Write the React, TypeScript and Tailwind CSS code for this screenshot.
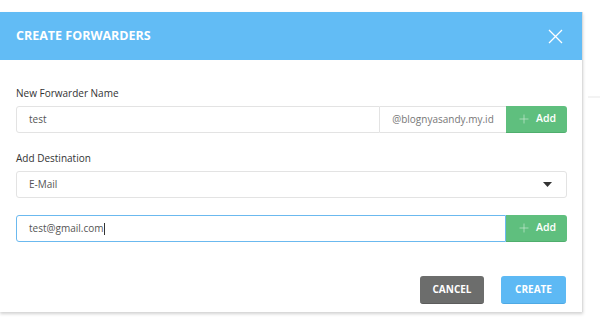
import { Plus } from 'lucide-react'

function AddButton(): JSX.Element {
  return (
    <button className="flex h-full w-[61px] shrink-0 items-center justify-center gap-[5px] rounded-r-[3px] border-b border-[#4fae6d] bg-[#5fbf7e] text-[10.5px] font-semibold text-white">
      <Plus className="h-[14px] w-[14px] opacity-70" strokeWidth={1.1} />
      Add
    </button>
  )
}

export default function App(): JSX.Element {
  return (
    <div
      className="relative h-[322px] w-[600px] overflow-hidden bg-white pt-[12px]"
      style={{ fontFamily: '"Open Sans", "Liberation Sans", sans-serif' }}
    >
      <div className="absolute right-[0px] top-[96px] h-[2px] w-[12px] bg-[#f3f3f3]" />
      <div className="w-[583px] border-r border-[#dcdcdc] bg-white pb-[8px] shadow-[0_2px_3px_rgba(0,0,0,0.18)]">
        <div className="flex h-[48px] items-center justify-between bg-[#62bcf5] pl-[16px] pr-[19px]">
          <h1 className="text-[12.5px] font-bold text-white">CREATE FORWARDERS</h1>
          <svg width="15" height="15" viewBox="0 0 15 15" className="text-white">
            <path d="M1 1 L14 14 M14 1 L1 14" stroke="currentColor" strokeWidth="1.3" fill="none" />
          </svg>
        </div>

        <div className="px-[16px]">
          <label className="mt-[26px] block text-[10px] leading-[14px] text-[#333]">New Forwarder Name</label>
          <div className="mt-[6px] flex h-[27px] w-[551px]">
            <div className="flex flex-1 items-center rounded-l-[3px] border border-[#e3e3e3] pl-[12px] text-[10px] text-[#555]">
              test
            </div>
            <div className="flex w-[126px] items-center justify-center border-y border-[#e3e3e3] text-[10px] text-[#777]">
              @blognyasandy.my.id
            </div>
            <AddButton />
          </div>

          <label className="mt-[18px] block text-[10px] leading-[14px] text-[#333]">Add Destination</label>
          <div className="mt-[6px] flex h-[27px] w-[551px] items-center justify-between rounded-[3px] border border-[#e3e3e3] pl-[12px] pr-[14px] text-[10px] text-[#555]">
            E-Mail
            <svg width="9" height="5" viewBox="0 0 9 5">
              <path d="M0 0 H9 L4.5 5 Z" fill="#333" />
            </svg>
          </div>

          <div className="mt-[17px] flex h-[27px] w-[551px]">
            <div className="flex flex-1 items-center rounded-l-[3px] border border-[#6bb9ef] pl-[12px] text-[10px] text-[#555]">
              test@gmail.com
              <span className="ml-[1px] h-[12px] w-[1px] bg-[#333]" />
            </div>
            <AddButton />
          </div>

          <div className="mt-[34px] flex justify-end gap-[17px]">
            <button className="h-[28px] w-[64px] rounded-[3px] border-b border-[#5c5c5c] bg-[#6c6d6c] text-[10px] font-bold text-white">
              CANCEL
            </button>
            <button className="h-[28px] w-[65px] rounded-[3px] border-b border-[#4ea9e4] bg-[#5db9f4] text-[10px] font-bold text-white">
              CREATE
            </button>
          </div>
        </div>
      </div>
    </div>
  )
}
